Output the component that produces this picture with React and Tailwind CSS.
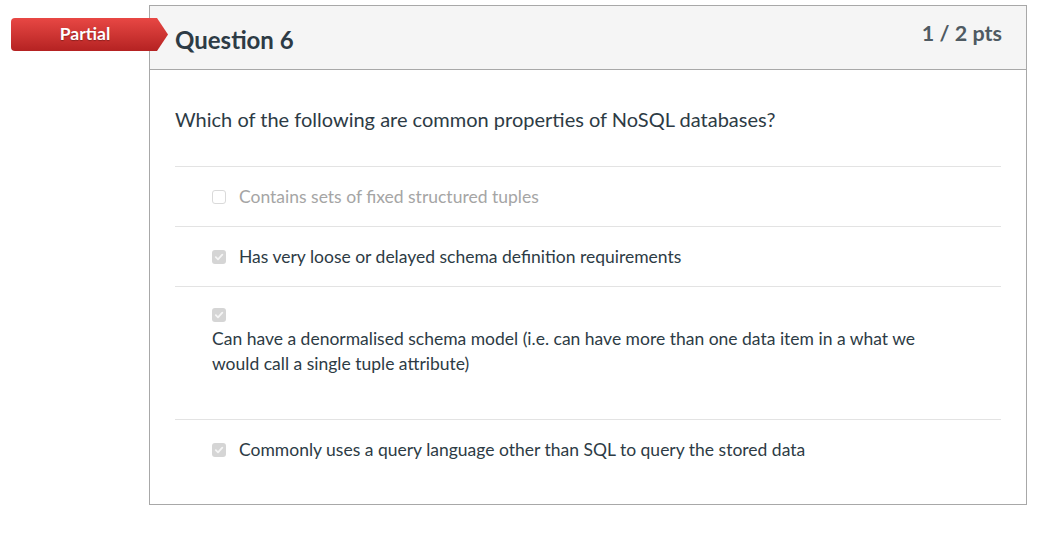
import React from "react";

function Check({ checked }) {
  if (!checked) {
    return <span className="inline-block w-[14px] h-[14px] rounded-[3px] border border-[#dadada] bg-white shrink-0" />;
  }
  return (
    <span className="inline-flex items-center justify-center w-[14px] h-[14px] rounded-[3px] bg-[#d5d5d5] shrink-0">
      <svg width="10" height="10" viewBox="0 0 10 10">
        <path d="M1.8 5.2 L4 7.3 L8.3 2.6" fill="none" stroke="#f5f5f5" strokeWidth="1.8" strokeLinecap="round" strokeLinejoin="round" />
      </svg>
    </span>
  );
}

export default function App() {
  return (
    <div className="w-[1041px] h-[533px] bg-white relative" style={{ fontFamily: "Lato, 'Open Sans', sans-serif" }}>
      <div className="absolute left-[11px] top-[18px] w-[157px] h-[33px] rounded-l-[4px] bg-gradient-to-b from-[#e84744] to-[#b52222] [clip-path:polygon(0_0,146px_0,157px_50%,146px_100%,0_100%)] flex items-center">
        <span className="w-[148px] text-center text-white font-bold text-[17.5px] leading-[20px] pb-[2px] [text-shadow:0_1px_1px_rgba(0,0,0,0.3)]">Partial</span>
      </div>
      <div className="pt-[5px] pl-[149px]">
        <div className="w-[878px] h-[500px] border border-[#a8a8a8] flex flex-col">
          <div className="h-[64px] bg-[#f5f5f5] border-b border-[#a8a8a8] flex justify-between pl-[25px] pr-[24px]">
            <div className="pt-[19px] text-[24px] font-bold text-[#2d3b45] leading-[30px]">Question 6</div>
            <div className="pt-[15px] text-[21.5px] font-bold text-[#4f5a62] leading-[24px]">1 / 2 pts</div>
          </div>
          <div className="px-[25px]">
            <div className="pt-[35px] pb-[33px] text-[20px] text-[#2d3b45] leading-[28px]">
              Which of the following are common properties of NoSQL databases?
            </div>
            <div className="border-t border-[#e3e3e3] h-[60px] flex items-center gap-[13px] pl-[37px] pt-[1px] text-[17.5px] text-[#a5a5a5]">
              <Check checked={false} />
              <span>Contains sets of fixed structured tuples</span>
            </div>
            <div className="border-t border-[#e3e3e3] h-[60px] flex items-center gap-[13px] pl-[37px] pt-[1px] text-[17.5px] text-[#2d3b45]">
              <Check checked />
              <span>Has very loose or delayed schema definition requirements</span>
            </div>
            <div className="border-t border-[#e3e3e3] h-[133px] pl-[37px] pt-[21px] text-[17.5px] text-[#2d3b45] leading-[25px]">
              <div className="h-[14px] mb-[4px] flex"><Check checked /></div>
              <div className="w-[720px]">Can have a denormalised schema model (i.e. can have more than one data item in a what we would call a single tuple attribute)</div>
            </div>
            <div className="border-t border-[#e3e3e3] h-[60px] flex items-center gap-[13px] pl-[37px] pt-[1px] text-[17.5px] text-[#2d3b45]">
              <Check checked />
              <span>Commonly uses a query language other than SQL to query the stored data</span>
            </div>
          </div>
        </div>
      </div>
    </div>
  );
}
